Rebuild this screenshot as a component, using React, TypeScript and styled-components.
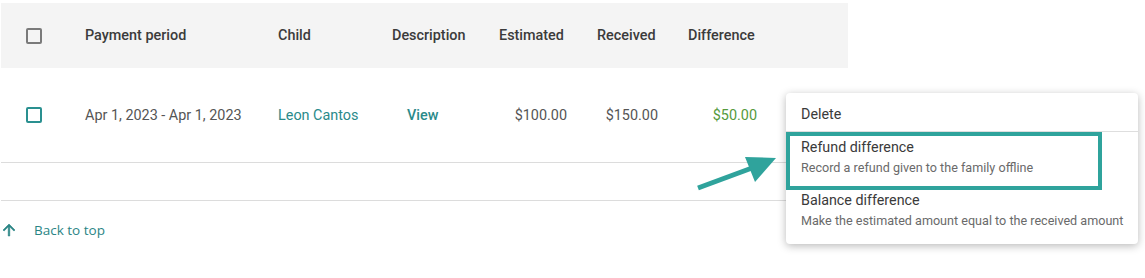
import React from "react";
import styled, { createGlobalStyle } from "styled-components";

const Global = createGlobalStyle`
  html, body { margin: 0; padding: 0; background: #fff; }
  body { font-family: Roboto, "Liberation Sans", Arial, sans-serif; }
  * { box-sizing: border-box; }
`;

const Page = styled.div`
  position: relative;
  width: 1145px;
  height: 278px;
  overflow: hidden;
  padding-top: 3px;
`;

const Table = styled.div`
  width: 847px;
  margin-left: 1px;
`;

const Row = styled.div<{ $head?: boolean; $h: number; $line?: boolean }>`
  display: grid;
  grid-template-columns: 84px 193px 114px 107px 98px 91px 159px;
  align-items: center;
  height: ${(p) => p.$h}px;
  background: ${(p) => (p.$head ? "#f4f4f4" : "#fff")};
  border-bottom: ${(p) => (p.$line ? "1px solid #dcdcdc" : "none")};
  font-size: 14.4px;
  font-weight: ${(p) => (p.$head ? 500 : 400)};
  color: ${(p) => (p.$head ? "#3b3b3b" : "#555")};
`;

const Cell = styled.div<{ $indent?: number; $color?: string; $bold?: boolean }>`
  padding-left: ${(p) => p.$indent ?? 0}px;
  color: ${(p) => p.$color ?? "inherit"};
  font-weight: ${(p) => (p.$bold ? 500 : "inherit")};
  white-space: nowrap;
`;

const CheckCell = styled.div`
  display: flex;
  padding-left: 25px;
`;

const Check = styled.span<{ $color: string }>`
  display: block;
  width: 16px;
  height: 16px;
  border: 2px solid ${(p) => p.$color};
  border-radius: 2px;
`;

const Amount = styled.span<{ $w: number; $color?: string }>`
  display: inline-block;
  width: ${(p) => p.$w}px;
  text-align: right;
  color: ${(p) => p.$color ?? "#555"};
`;

const BackToTop = styled.div`
  display: flex;
  align-items: center;
  gap: 16px;
  margin-top: 20px;
  height: 18px;
  font-family: "Open Sans", "Liberation Sans", sans-serif;
  font-size: 13.5px;
  color: #2a8585;
`;

const Menu = styled.div`
  position: absolute;
  left: 786px;
  top: 93px;
  width: 352px;
  background: #fff;
  border-radius: 4px;
  box-shadow: 0 2px 8px rgba(0, 0, 0, 0.28);
  display: flex;
  flex-direction: column;
`;

const MenuItem = styled.div<{ $divider?: boolean; $h: number; $top: number }>`
  height: ${(p) => p.$h}px;
  padding: ${(p) => p.$top}px 0 0 15px;
  display: flex;
  flex-direction: column;
  gap: 4px;
  border-bottom: ${(p) => (p.$divider ? "1px solid #dedede" : "none")};
`;

const ItemTitle = styled.div`
  font-size: 14.3px;
  color: #3a3a3a;
  line-height: 18px;
`;

const ItemDesc = styled.div`
  font-size: 12.6px;
  color: #6a6a6a;
  line-height: 16px;
`;

const Callout = styled.div`
  position: absolute;
  left: 786px;
  top: 132px;
  width: 316px;
  height: 58px;
  border: 4px solid #2fa39c;
`;

const ArrowSvg = styled.svg`
  position: absolute;
  left: 690px;
  top: 150px;
`;

export default function App() {
  return (
    <>
      <Global />
      <Page>
        <Table>
          <Row $head $h={65}>
            <CheckCell>
              <Check $color="#7a7a7a" />
            </CheckCell>
            <Cell>Payment period</Cell>
            <Cell>Child</Cell>
            <Cell>Description</Cell>
            <Cell>Estimated</Cell>
            <Cell>Received</Cell>
            <Cell>Difference</Cell>
          </Row>
          <Row $h={95} $line>
            <CheckCell>
              <Check $color="#2a9090" />
            </CheckCell>
            <Cell>Apr 1, 2023 - Apr 1, 2023</Cell>
            <Cell $color="#2a8a8a">Leon Cantos</Cell>
            <Cell $indent={15} $color="#2a8a8a" $bold>
              View
            </Cell>
            <Cell>
              <Amount $w={68}>$100.00</Amount>
            </Cell>
            <Cell>
              <Amount $w={61}>$150.00</Amount>
            </Cell>
            <Cell>
              <Amount $w={69} $color="#559a3c">
                $50.00
              </Amount>
            </Cell>
          </Row>
          <Row $h={38} $line />
        </Table>
        <BackToTop>
          <svg width="18" height="18" viewBox="0 0 24 24">
            <path
              fill="#2a8585"
              stroke="#2a8585"
              strokeWidth="0.8"
              d="M4 12l1.41 1.41L11 7.83V20h2V7.83l5.58 5.59L20 12l-8-8-8 8z"
            />
          </svg>
          <span>Back to top</span>
        </BackToTop>

        <Menu>
          <MenuItem $h={39} $top={12} $divider>
            <ItemTitle>Delete</ItemTitle>
          </MenuItem>
          <MenuItem $h={52} $top={6}>
            <ItemTitle>Refund difference</ItemTitle>
            <ItemDesc>Record a refund given to the family offline</ItemDesc>
          </MenuItem>
          <MenuItem $h={60} $top={7}>
            <ItemTitle>Balance difference</ItemTitle>
            <ItemDesc>Make the estimated amount equal to the received amount</ItemDesc>
          </MenuItem>
        </Menu>
        <Callout />
        <ArrowSvg width="95" height="45" viewBox="0 0 95 45">
          <line x1="8" y1="38" x2="62" y2="18" stroke="#2fa39c" strokeWidth="5" />
          <polygon points="86,8 55,7 65,32" fill="#2fa39c" />
        </ArrowSvg>
      </Page>
    </>
  );
}
